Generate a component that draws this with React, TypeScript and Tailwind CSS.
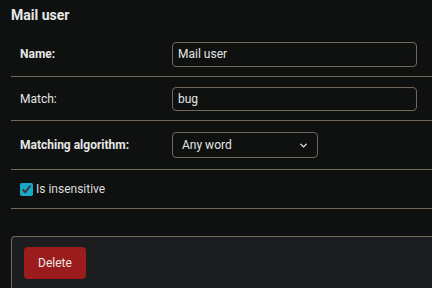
import { ChevronDown } from 'lucide-react';

const line = 'border-b border-[#71675a]';

const Row = ({ label, bold, children, h }: { label?: string; bold?: boolean; children: React.ReactNode; h: string }) => (
  <div className={`flex items-center ${h} ${line}`}>
    {label && (
      <label className={`w-[161px] pl-[9px] text-[12px] text-[#e6e6e6] ${bold ? 'font-bold' : ''}`}>{label}</label>
    )}
    {children}
  </div>
);

export default function App() {
  return (
    <div className="w-[432px] h-[288px] overflow-hidden bg-[#0f1111] font-['Roboto',sans-serif] text-[#e6e6e6]">
      <h2 className="pl-[11px] pt-[5px] h-[32px] text-[14px] font-bold leading-[20px] text-[#e8e8e8]">Mail user</h2>
      <div className="ml-[11px]">
        <Row label="Name:" bold h="h-[45px]">
          <input
            defaultValue="Mail user"
            className="w-[245px] h-[25px] rounded-[4px] border border-[#71675a] bg-transparent px-[5px] text-[12px] text-[#e6e6e6] outline-none"
          />
        </Row>
        <Row label="Match:" h="h-[44px]">
          <input
            defaultValue="bug"
            className="w-[245px] h-[24px] rounded-[4px] border border-[#71675a] bg-transparent px-[5px] text-[12px] text-[#e6e6e6] outline-none"
          />
        </Row>
        <Row label="Matching algorithm:" bold h="h-[49px]">
          <div className="relative">
            <select className="w-[146px] h-[26px] appearance-none rounded-[4px] border border-[#71675a] bg-transparent pl-[9px] text-[12px] text-[#e6e6e6] outline-none">
              <option>Any word</option>
            </select>
            <ChevronDown className="absolute right-[9px] top-[8px] w-[11px] h-[11px] text-[#e6e6e6] pointer-events-none" strokeWidth={3} />
          </div>
        </Row>
        <div className={`flex items-center h-[39px] pl-[9px] gap-[3px] ${line}`}>
          <input type="checkbox" defaultChecked className="w-[13px] h-[13px] m-0 accent-[#17a9c9]" />
          <span className="text-[12px] text-[#dcdcdc]">Is insensitive</span>
        </div>
      </div>
      <div className="ml-[11px] mt-[27px] h-[60px] rounded-tl-[4px] border-t border-l border-[#71675a] bg-[#1c1d1f] pl-[12px] pt-[10px]">
        <button className="w-[62px] h-[32px] rounded-[4px] bg-[#9b1c1c] text-[12px] text-[#f0e6e6]">Delete</button>
      </div>
    </div>
  );
}
